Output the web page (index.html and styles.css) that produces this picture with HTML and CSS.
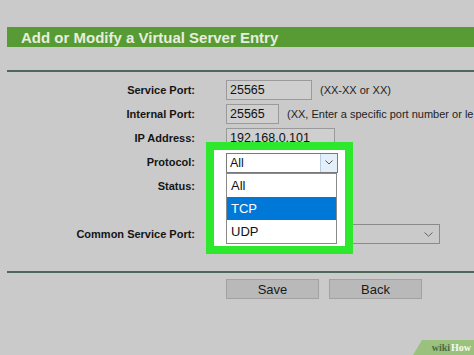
FILE: index.html
```html
<!DOCTYPE html>
<html lang="en">
<head>
    <meta charset="UTF-8">
    <meta name="viewport" content="width=device-width, initial-scale=1.0">
    <title>Virtual Server Entry</title>
    <link rel="stylesheet" href="styles.css">
</head>
<body>
    <div class="page">
        <header class="title-bar">
            <h1>Add or Modify a Virtual Server Entry</h1>
        </header>
        <hr class="divider first">

        <div class="entry-form">
            <div class="label">Service Port:</div>
            <div class="field">
                <div class="text-box service">25565</div>
                <span class="hint">(XX-XX or XX)</span>
            </div>

            <div class="label">Internal Port:</div>
            <div class="field clip">
                <div class="text-box internal">25565</div>
                <span class="hint">(XX, Enter a specific port number or le</span>
            </div>

            <div class="label">IP Address:</div>
            <div class="field">
                <div class="text-box ip">192.168.0.101</div>
            </div>

            <div class="label">Protocol:</div>
            <div class="field protocol-field">
                <div class="highlight"></div>
                <div class="select protocol">
                    <span>All</span>
                    <span class="select-btn">
                        <svg width="8" height="5" viewBox="0 0 8 5"><path d="M0.5 0.5 L4 4 L7.5 0.5" fill="none" stroke="#555" stroke-width="1"/></svg>
                    </span>
                </div>
                <ul class="option-list">
                    <li>All</li>
                    <li class="active">TCP</li>
                    <li>UDP</li>
                </ul>
            </div>

            <div class="label">Status:</div>
            <div class="field">
                <div class="select status"></div>
            </div>

            <div class="label"></div>
            <div class="field"></div>

            <div class="label">Common Service Port:</div>
            <div class="field">
                <div class="select common">
                    <svg width="9" height="5" viewBox="0 0 9 5"><path d="M0.5 0.5 L4.5 4.2 L8.5 0.5" fill="none" stroke="#666" stroke-width="1"/></svg>
                </div>
            </div>
        </div>

        <hr class="divider second">

        <div class="actions">
            <button class="btn">Save</button>
            <button class="btn">Back</button>
        </div>
    </div>

    <div class="badge"><span class="wiki">wiki</span><span class="how">How</span></div>
</body>
</html>
```
FILE: styles.css
```css
body {
    font-family: "Liberation Sans", Arial, sans-serif;
    margin: 0;
    padding: 0;
    background-color: #cacaca;
    height: 355px;
    overflow: hidden;
    position: relative;
}

.page {
    padding-left: 7px;
    padding-top: 27px;
}

.title-bar {
    background-color: #589b34;
    height: 20px;
    display: flex;
    align-items: center;
    padding-left: 14px;
}

.title-bar h1 {
    margin: 0;
    font-size: 15px;
    font-weight: bold;
    color: #e6eedf;
    white-space: nowrap;
}

.divider {
    border: none;
    margin: 0;
    height: 2px;
    background-color: #4d685a;
}

.divider.first {
    margin-top: 23px;
}

.divider.second {
    margin-top: 27px;
}

.entry-form {
    margin-top: 8px;
    display: grid;
    grid-template-columns: 188px 1fr;
    grid-auto-rows: 20px;
    column-gap: 31px;
    row-gap: 4px;
}

.label {
    font-size: 11px;
    font-weight: bold;
    color: #151515;
    text-align: right;
    display: flex;
    align-items: center;
    justify-content: flex-end;
}

.field {
    display: flex;
    align-items: center;
    gap: 8px;
    white-space: nowrap;
}

.field.clip {
    overflow: hidden;
}

.text-box {
    box-sizing: border-box;
    flex-shrink: 0;
    height: 20px;
    border: 1px solid #9a9a9a;
    background-color: #cfcfcf;
    font-size: 12.5px;
    color: #111;
    padding-left: 3px;
    display: flex;
    align-items: center;
}

.text-box.service {
    width: 86px;
}

.text-box.internal {
    width: 53px;
}

.text-box.ip {
    width: 109px;
}

.hint {
    font-size: 11px;
    color: #222;
}

.select {
    box-sizing: border-box;
    height: 20px;
    border: 1px solid #8a8a8a;
    display: flex;
    align-items: center;
    justify-content: space-between;
    font-size: 12.5px;
    color: #111;
}

.protocol-field {
    position: relative;
}

.highlight {
    position: absolute;
    left: -20px;
    top: -10px;
    width: 147px;
    height: 112px;
    box-sizing: border-box;
    border: 8px solid #2ee82e;
    background-color: #fff;
    z-index: 1;
}

.select.protocol {
    position: relative;
    z-index: 2;
    width: 112px;
    margin-top: 1px;
    background-color: #fff;
    border-color: #7a7a7a;
    padding-left: 3px;
}

.select-btn {
    width: 16px;
    height: 18px;
    background-color: #e4eff9;
    border-left: 1px solid #b7cde2;
    display: flex;
    align-items: center;
    justify-content: center;
}

.option-list {
    position: absolute;
    z-index: 2;
    left: 0;
    top: 21px;
    width: 111px;
    margin: 0;
    padding: 0;
    list-style: none;
    background-color: #fff;
    border: 1px solid #8a8a8a;
    box-sizing: border-box;
}

.option-list li {
    height: 23px;
    display: flex;
    align-items: center;
    padding-left: 4px;
    font-size: 13px;
    color: #111;
}

.option-list li.active {
    background-color: #0078d7;
    color: #fff;
}

.select.status {
    width: 112px;
    background-color: #cfcfcf;
}

.select.common {
    width: 214px;
    padding: 0 6px 0 4px;
    justify-content: flex-end;
    background-color: #cacaca;
}

.actions {
    margin-top: 6px;
    padding-left: 219px;
    display: flex;
    gap: 10px;
}

.btn {
    width: 93px;
    height: 20px;
    padding: 0;
    background-color: #b9b9b9;
    border: 1px solid #a2a2a2;
    font-family: "Liberation Sans", Arial, sans-serif;
    font-size: 13px;
    color: #1a1a1a;
}

.badge {
    position: absolute;
    right: 0;
    bottom: 0;
    width: 58px;
    height: 15px;
    background-color: #9bc17e;
    clip-path: polygon(9px 0, 100% 0, 100% 100%, 0 100%);
    display: flex;
    align-items: center;
    justify-content: flex-end;
    padding-right: 3px;
    font-family: "Liberation Serif", serif;
    font-weight: bold;
    font-size: 10px;
}

.badge .wiki {
    color: #4f6b3e;
}

.badge .how {
    color: #f4f8ef;
    margin-left: 1px;
}
```
